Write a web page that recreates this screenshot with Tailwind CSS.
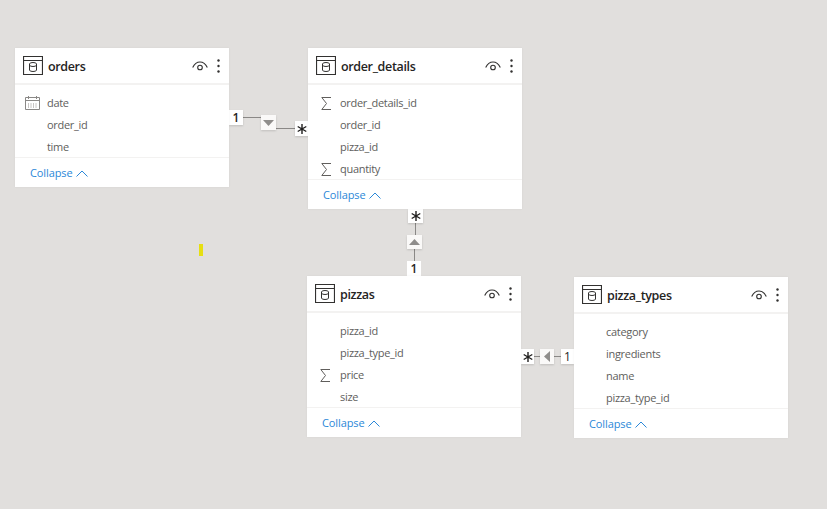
<!doctype html>
<html lang="en">
  <head>
    <meta charset="UTF-8" />
    <title>Model view</title>
    <script src="https://cdn.jsdelivr.net/npm/@tailwindcss/browser@4"></script>
  </head>
  <body class="bg-[#e1dfdd] font-['Open_Sans',sans-serif]">
    <div class="relative w-[827px] h-[509px] overflow-hidden">

      <!-- relationship lines -->
      <div class="absolute left-[243px] top-[117px] w-[19px] h-[1px] bg-[#8a8886]"></div>
      <div class="absolute left-[276px] top-[128px] w-[20px] h-[1px] bg-[#8a8886]"></div>
      <div class="absolute left-[415px] top-[223px] w-[1px] h-[12px] bg-[#8a8886]"></div>
      <div class="absolute left-[414px] top-[249px] w-[1px] h-[12px] bg-[#8a8886]"></div>
      <div class="absolute left-[534px] top-[356px] w-[6px] h-[1px] bg-[#8a8886]"></div>
      <div class="absolute left-[554px] top-[356px] w-[7px] h-[1px] bg-[#8a8886]"></div>

      <!-- orders -> order_details -->
      <div class="absolute left-[229px] top-[110px] w-[14px] h-[15px] bg-white shadow-[0_1px_2px_rgba(0,0,0,0.15)] flex items-center justify-center text-[12px] font-semibold text-[#252423]">1</div>
      <div class="absolute left-[261px] top-[115px] w-[15px] h-[15px] bg-[#faf9f8] shadow-[0_1px_2px_rgba(0,0,0,0.15)] flex items-center justify-center">
        <svg width="11" height="6" viewBox="0 0 11 6"><path d="M0 0h11L5.500 6z" fill="#8f8d8b"/></svg>
      </div>
      <div class="absolute left-[295px] top-[121px] w-[14px] h-[15px] bg-white shadow-[0_1px_2px_rgba(0,0,0,0.15)] flex items-center justify-center">
        <svg width="10" height="10" viewBox="0 0 10 10"><path d="M5 0v10M.7 2.500l8.600 5M.7 7.500l8.600-5" stroke="#201f1e" stroke-width="1.400" fill="none"/></svg>
      </div>

      <!-- pizzas -> order_details -->
      <div class="absolute left-[408px] top-[209px] w-[15px] h-[14px] bg-white shadow-[0_1px_2px_rgba(0,0,0,0.15)] flex items-center justify-center">
        <svg width="10" height="10" viewBox="0 0 10 10"><path d="M5 0v10M.7 2.500l8.600 5M.7 7.500l8.600-5" stroke="#201f1e" stroke-width="1.400" fill="none"/></svg>
      </div>
      <div class="absolute left-[407px] top-[235px] w-[15px] h-[14px] bg-[#faf9f8] shadow-[0_1px_2px_rgba(0,0,0,0.15)] flex items-center justify-center">
        <svg width="11" height="6" viewBox="0 0 11 6"><path d="M0 6h11L5.500 0z" fill="#8f8d8b"/></svg>
      </div>
      <div class="absolute left-[407px] top-[261px] w-[14px] h-[15px] bg-white flex items-center justify-center text-[12px] font-semibold text-[#252423]">1</div>

      <!-- pizza_types -> pizzas -->
      <div class="absolute left-[521px] top-[349px] w-[13px] h-[15px] bg-white shadow-[0_1px_2px_rgba(0,0,0,0.15)] flex items-center justify-center">
        <svg width="10" height="10" viewBox="0 0 10 10"><path d="M5 0v10M.7 2.500l8.600 5M.7 7.500l8.600-5" stroke="#201f1e" stroke-width="1.400" fill="none"/></svg>
      </div>
      <div class="absolute left-[540px] top-[349px] w-[14px] h-[15px] bg-[#faf9f8] shadow-[0_1px_2px_rgba(0,0,0,0.15)] flex items-center justify-center">
        <svg width="6" height="11" viewBox="0 0 6 11"><path d="M6 0v11L0 5.500z" fill="#8f8d8b"/></svg>
      </div>
      <div class="absolute left-[561px] top-[349px] w-[13px] h-[15px] bg-white shadow-[0_1px_2px_rgba(0,0,0,0.15)] flex items-center justify-center text-[12px] font-medium text-[#252423]">1</div>

      <!-- stray yellow mark -->
      <div class="absolute left-[199px] top-[244px] w-[4px] h-[12px] bg-[#e6df12]"></div>

      <!-- orders -->
      <div class="absolute left-[15px] top-[48px] w-[214px] bg-white shadow-[0_0_2px_rgba(0,0,0,0.06)]">
        <div class="h-[37px] flex items-center pl-[8px] pr-[9px] border-b-2 border-[#f3f2f1]">
          <svg class="shrink-0" width="20" height="19" viewBox="0 0 20 19" fill="none" stroke="#323130"><path d="M.5.5h19v18H.5zM.5 4.500h19" stroke-width="1.200"/><path d="M6.500 8a3.500 1.500 0 0 1 7 0v6a3.500 1.500 0 0 1-7 0zM6.500 9a3.500 1.500 0 0 0 7 0" stroke-width="1"/></svg>
          <span class="ml-[5px] pt-[4px] text-[12.500px] font-semibold tracking-[-0.35px] text-[#252423]">orders</span>
          <svg class="ml-auto" width="16" height="10" viewBox="0 0 16 10" fill="none" stroke="#323130"><path d="M.7 6.500C2.500 2.700 5 1 8 1s5.500 1.700 7.300 5.500" stroke-width="1.100"/><circle cx="8" cy="6.500" r="2.300" stroke-width="1.100"/></svg>
          <svg class="ml-[9px]" width="3" height="14" viewBox="0 0 3 14" fill="#323130"><circle cx="1.500" cy="1.500" r="1.200"/><circle cx="1.500" cy="7" r="1.200"/><circle cx="1.500" cy="12.500" r="1.200"/></svg>
        </div>
        <div class="pt-[6px] text-[11px] tracking-[-0.3px] text-[#605e5c]">
          <div class="h-[22px] pt-[2px] flex items-center">
            <span class="w-[32px] pl-[10px]">
              <svg width="15" height="14" viewBox="0 0 15 14" fill="none" stroke="#a19f9d"><path d="M.5 1.500h14v12H.5zM.5 4.500h14M3.500 0v3M11.500 0v3" stroke="#8a8886"/><path d="M3.500 7v5M6 7v5M8.500 7v5M11 7v5" stroke="#c8c6c4"/></svg>
            </span>
            <span>date</span>
          </div>
          <div class="h-[22px] pt-[2px] flex items-center pl-[32px]">order_id</div>
          <div class="h-[22px] pt-[2px] flex items-center pl-[32px]">time</div>
        </div>
        <div class="h-[30px] pt-[2px] flex items-center pl-[15px] border-t border-[#f3f2f1] text-[11px] tracking-[-0.1px] text-[#2b88d8]">
          <span>Collapse</span>
          <svg class="ml-[3px]" width="12" height="7" viewBox="0 0 12 7" fill="none" stroke="#2b88d8"><path d="M.5 6.500L6 1l5.500 5.500"/></svg>
        </div>
      </div>

      <!-- order_details -->
      <div class="absolute left-[308px] top-[48px] w-[214px] bg-white shadow-[0_0_2px_rgba(0,0,0,0.06)]">
        <div class="h-[37px] flex items-center pl-[8px] pr-[9px] border-b-2 border-[#f3f2f1]">
          <svg class="shrink-0" width="20" height="19" viewBox="0 0 20 19" fill="none" stroke="#323130"><path d="M.5.5h19v18H.5zM.5 4.500h19" stroke-width="1.200"/><path d="M6.500 8a3.500 1.500 0 0 1 7 0v6a3.500 1.500 0 0 1-7 0zM6.500 9a3.500 1.500 0 0 0 7 0" stroke-width="1"/></svg>
          <span class="ml-[5px] pt-[4px] text-[12.500px] font-semibold tracking-[-0.35px] text-[#252423]">order_details</span>
          <svg class="ml-auto" width="16" height="10" viewBox="0 0 16 10" fill="none" stroke="#323130"><path d="M.7 6.500C2.500 2.700 5 1 8 1s5.500 1.700 7.300 5.500" stroke-width="1.100"/><circle cx="8" cy="6.500" r="2.300" stroke-width="1.100"/></svg>
          <svg class="ml-[9px]" width="3" height="14" viewBox="0 0 3 14" fill="#323130"><circle cx="1.500" cy="1.500" r="1.200"/><circle cx="1.500" cy="7" r="1.200"/><circle cx="1.500" cy="12.500" r="1.200"/></svg>
        </div>
        <div class="pt-[6px] text-[11px] tracking-[-0.3px] text-[#605e5c]">
          <div class="h-[22px] pt-[2px] flex items-center">
            <span class="w-[32px] pl-[13px]">
              <svg width="10" height="13" viewBox="0 0 10 13" fill="none" stroke="#605e5c"><path d="M10 .5H.8L5.500 6.500.8 12.500H10"/></svg>
            </span>
            <span>order_details_id</span>
          </div>
          <div class="h-[22px] pt-[2px] flex items-center pl-[32px]">order_id</div>
          <div class="h-[22px] pt-[2px] flex items-center pl-[32px]">pizza_id</div>
          <div class="h-[22px] pt-[2px] flex items-center">
            <span class="w-[32px] pl-[13px]">
              <svg width="10" height="13" viewBox="0 0 10 13" fill="none" stroke="#605e5c"><path d="M10 .5H.8L5.500 6.500.8 12.500H10"/></svg>
            </span>
            <span>quantity</span>
          </div>
        </div>
        <div class="h-[30px] pt-[2px] flex items-center pl-[15px] border-t border-[#f3f2f1] text-[11px] tracking-[-0.1px] text-[#2b88d8]">
          <span>Collapse</span>
          <svg class="ml-[3px]" width="12" height="7" viewBox="0 0 12 7" fill="none" stroke="#2b88d8"><path d="M.5 6.500L6 1l5.500 5.500"/></svg>
        </div>
      </div>

      <!-- pizzas -->
      <div class="absolute left-[307px] top-[276px] w-[214px] bg-white shadow-[0_0_2px_rgba(0,0,0,0.06)]">
        <div class="h-[37px] flex items-center pl-[8px] pr-[9px] border-b-2 border-[#f3f2f1]">
          <svg class="shrink-0" width="20" height="19" viewBox="0 0 20 19" fill="none" stroke="#323130"><path d="M.5.5h19v18H.5zM.5 4.500h19" stroke-width="1.200"/><path d="M6.500 8a3.500 1.500 0 0 1 7 0v6a3.500 1.500 0 0 1-7 0zM6.500 9a3.500 1.500 0 0 0 7 0" stroke-width="1"/></svg>
          <span class="ml-[5px] pt-[4px] text-[12.500px] font-semibold tracking-[-0.35px] text-[#252423]">pizzas</span>
          <svg class="ml-auto" width="16" height="10" viewBox="0 0 16 10" fill="none" stroke="#323130"><path d="M.7 6.500C2.500 2.700 5 1 8 1s5.500 1.700 7.300 5.500" stroke-width="1.100"/><circle cx="8" cy="6.500" r="2.300" stroke-width="1.100"/></svg>
          <svg class="ml-[9px]" width="3" height="14" viewBox="0 0 3 14" fill="#323130"><circle cx="1.500" cy="1.500" r="1.200"/><circle cx="1.500" cy="7" r="1.200"/><circle cx="1.500" cy="12.500" r="1.200"/></svg>
        </div>
        <div class="pt-[6px] text-[11px] tracking-[-0.3px] text-[#605e5c]">
          <div class="h-[22px] pt-[2px] flex items-center pl-[33px]">pizza_id</div>
          <div class="h-[22px] pt-[2px] flex items-center pl-[33px]">pizza_type_id</div>
          <div class="h-[22px] pt-[2px] flex items-center">
            <span class="w-[33px] pl-[13px]">
              <svg width="10" height="13" viewBox="0 0 10 13" fill="none" stroke="#605e5c"><path d="M10 .5H.8L5.500 6.500.8 12.500H10"/></svg>
            </span>
            <span>price</span>
          </div>
          <div class="h-[22px] pt-[2px] flex items-center pl-[33px]">size</div>
        </div>
        <div class="h-[30px] pt-[2px] flex items-center pl-[15px] border-t border-[#f3f2f1] text-[11px] tracking-[-0.1px] text-[#2b88d8]">
          <span>Collapse</span>
          <svg class="ml-[3px]" width="12" height="7" viewBox="0 0 12 7" fill="none" stroke="#2b88d8"><path d="M.5 6.500L6 1l5.500 5.500"/></svg>
        </div>
      </div>

      <!-- pizza_types -->
      <div class="absolute left-[574px] top-[277px] w-[214px] bg-white shadow-[0_0_2px_rgba(0,0,0,0.06)]">
        <div class="h-[37px] flex items-center pl-[8px] pr-[9px] border-b-2 border-[#f3f2f1]">
          <svg class="shrink-0" width="20" height="19" viewBox="0 0 20 19" fill="none" stroke="#323130"><path d="M.5.5h19v18H.5zM.5 4.500h19" stroke-width="1.200"/><path d="M6.500 8a3.500 1.500 0 0 1 7 0v6a3.500 1.500 0 0 1-7 0zM6.500 9a3.500 1.500 0 0 0 7 0" stroke-width="1"/></svg>
          <span class="ml-[5px] pt-[4px] text-[12.500px] font-semibold tracking-[-0.35px] text-[#252423]">pizza_types</span>
          <svg class="ml-auto" width="16" height="10" viewBox="0 0 16 10" fill="none" stroke="#323130"><path d="M.7 6.500C2.500 2.700 5 1 8 1s5.500 1.700 7.300 5.500" stroke-width="1.100"/><circle cx="8" cy="6.500" r="2.300" stroke-width="1.100"/></svg>
          <svg class="ml-[9px]" width="3" height="14" viewBox="0 0 3 14" fill="#323130"><circle cx="1.500" cy="1.500" r="1.200"/><circle cx="1.500" cy="7" r="1.200"/><circle cx="1.500" cy="12.500" r="1.200"/></svg>
        </div>
        <div class="pt-[6px] text-[11px] tracking-[-0.3px] text-[#605e5c]">
          <div class="h-[22px] pt-[2px] flex items-center pl-[32px]">category</div>
          <div class="h-[22px] pt-[2px] flex items-center pl-[32px]">ingredients</div>
          <div class="h-[22px] pt-[2px] flex items-center pl-[32px]">name</div>
          <div class="h-[22px] pt-[2px] flex items-center pl-[32px]">pizza_type_id</div>
        </div>
        <div class="h-[30px] pt-[2px] flex items-center pl-[15px] border-t border-[#f3f2f1] text-[11px] tracking-[-0.1px] text-[#2b88d8]">
          <span>Collapse</span>
          <svg class="ml-[3px]" width="12" height="7" viewBox="0 0 12 7" fill="none" stroke="#2b88d8"><path d="M.5 6.500L6 1l5.500 5.500"/></svg>
        </div>
      </div>
    </div>
  </body>
</html>
